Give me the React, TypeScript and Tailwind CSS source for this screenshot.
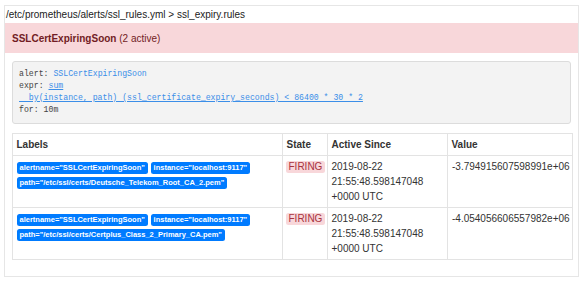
const font = { fontFamily: '"Liberation Sans", Arial, sans-serif' };

interface AlertRow {
  labels: string[];
  since: string[];
  value: string;
}

const rows: AlertRow[] = [
  {
    labels: [
      'alertname="SSLCertExpiringSoon"',
      'instance="localhost:9117"',
      'path="/etc/ssl/certs/Deutsche_Telekom_Root_CA_2.pem"',
    ],
    since: ['2019-08-22', '21:55:48.598147048', '+0000 UTC'],
    value: '-3.794915607598991e+06',
  },
  {
    labels: [
      'alertname="SSLCertExpiringSoon"',
      'instance="localhost:9117"',
      'path="/etc/ssl/certs/Certplus_Class_2_Primary_CA.pem"',
    ],
    since: ['2019-08-22', '21:55:48.598147048', '+0000 UTC'],
    value: '-4.054056606557982e+06',
  },
];

function LabelBadge({ text }: { text: string }) {
  return (
    <span className="inline-block rounded-[2.5px] bg-[#007bff] px-[3px] py-[2px] align-baseline text-[7.5px] font-bold leading-none text-white">
      {text}
    </span>
  );
}

export default function App() {
  return (
    <div className="h-[281px] w-[585px] bg-white pl-[4px] pt-[5px] text-[10px] leading-[15px] text-[#333]" style={font}>
      <div className="w-[575px] border border-[#e6e6e6]">
        <div className="h-[17px] pl-[1px] text-[10px] leading-[17px] text-[#222]">
          /etc/prometheus/alerts/ssl_rules.yml &gt; ssl_expiry.rules
        </div>
        <div className="bg-[#f8d7da] px-[7px] py-[7.5px] text-[10px] leading-[15px] text-[#721c24]">
          <span className="font-bold">SSLCertExpiringSoon</span> (2 active)
        </div>
        <div className="px-[7px] pt-[8px] pb-[16px]">
          <pre
            className="rounded-[3px] border border-[#dcdcdc] bg-[#f3f3f3] px-[6px] pt-[6px] pb-[7px] text-[8.2px] leading-[12px] text-[#444]"
            style={{ fontFamily: '"Liberation Mono", "DejaVu Sans Mono", monospace' }}
          >
            {'alert: '}
            <span className="text-[#3b8ee8]">SSLCertExpiringSoon</span>
            {'\nexpr: '}
            <a className="text-[#3b8ee8] underline">
              {'sum\n  by(instance, path) (ssl_certificate_expiry_seconds) < 86400 * 30 * 2'}
            </a>
            {'\nfor: 10m'}
          </pre>

          <table className="mt-[9px] w-[560px] table-fixed border-collapse text-[10px] leading-[15px]">
            <colgroup>
              <col className="w-[270px]" />
              <col className="w-[45px]" />
              <col className="w-[120px]" />
              <col className="w-[125px]" />
            </colgroup>
            <thead>
              <tr>
                {['Labels', 'State', 'Active Since', 'Value'].map((h) => (
                  <th key={h} className="border border-[#e3e3e3] px-[3.5px] py-[3px] text-left font-bold text-[#333]">
                    {h}
                  </th>
                ))}
              </tr>
            </thead>
            <tbody>
              {rows.map((r, i) => (
                <tr key={i}>
                  <td className="border border-[#e3e3e3] px-[3.5px] py-[3px] align-top">
                    {r.labels.map((l, j) => (
                      <span key={j}>
                        <LabelBadge text={l} />{' '}
                      </span>
                    ))}
                  </td>
                  <td className="border border-[#e3e3e3] px-[3px] py-[3px] align-top">
                    <span className="inline-block rounded-[2.5px] bg-[#f8d7da] px-[2.5px] leading-[12px] text-[#a8333f]">
                      FIRING
                    </span>
                  </td>
                  <td className="border border-[#e3e3e3] px-[3.5px] py-[3px] align-top">
                    {r.since.map((s) => (
                      <div key={s}>{s}</div>
                    ))}
                  </td>
                  <td className="border border-[#e3e3e3] px-[4px] py-[3px] align-top">{r.value}</td>
                </tr>
              ))}
            </tbody>
          </table>
        </div>
      </div>
    </div>
  );
}
